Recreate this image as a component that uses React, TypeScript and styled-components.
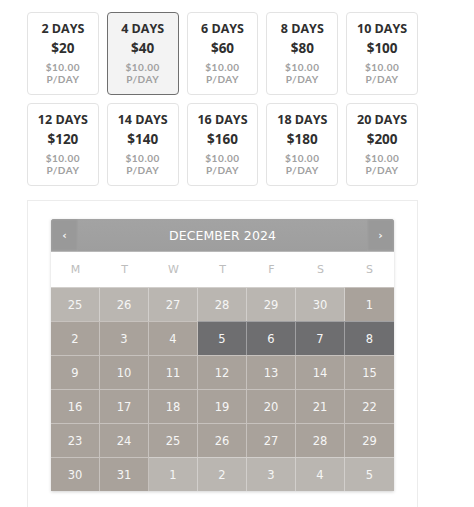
import React from "react";
import styled, { createGlobalStyle } from "styled-components";

const GlobalStyle = createGlobalStyle`
  html, body {
    margin: 0;
    padding: 0;
    background: #ffffff;
  }
  * {
    box-sizing: border-box;
  }
`;

type Plan = { days: number; total: number };

const plans: Plan[] = [2, 4, 6, 8, 10, 12, 14, 16, 18, 20].map((days) => ({
  days,
  total: days * 10,
}));

type DayKind = "other" | "current" | "selected";
type Day = { label: number; kind: DayKind };

const buildDays = (): Day[] => {
  const days: Day[] = [];
  [25, 26, 27, 28, 29, 30].forEach((d) => days.push({ label: d, kind: "other" }));
  for (let d = 1; d <= 31; d++) {
    days.push({ label: d, kind: d >= 5 && d <= 8 ? "selected" : "current" });
  }
  [1, 2, 3, 4, 5].forEach((d) => days.push({ label: d, kind: "other" }));
  return days;
};

const weekDays = ["M", "T", "W", "T", "F", "S", "S"];

export default function App() {
  const days = buildDays();
  return (
    <>
      <GlobalStyle />
      <Page>
        <PlanGrid>
          {plans.map((plan) => (
            <PlanCard key={plan.days} $active={plan.days === 4}>
              <PlanTitle>{plan.days} DAYS</PlanTitle>
              <PlanPrice>${plan.total}</PlanPrice>
              <PlanRate>$10.00</PlanRate>
              <PlanRate>P/DAY</PlanRate>
            </PlanCard>
          ))}
        </PlanGrid>
        <CalendarPanel>
          <Calendar>
            <CalendarHeader>
              <NavButton>‹</NavButton>
              <MonthTitle>DECEMBER 2024</MonthTitle>
              <NavButton>›</NavButton>
            </CalendarHeader>
            <WeekRow>
              {weekDays.map((w, i) => (
                <WeekDay key={i}>{w}</WeekDay>
              ))}
            </WeekRow>
            <DayGrid>
              {days.map((d, i) => (
                <DayCell key={i} $kind={d.kind} $last={i % 7 === 6}>
                  {d.label}
                </DayCell>
              ))}
            </DayGrid>
          </Calendar>
        </CalendarPanel>
      </Page>
    </>
  );
}

const Page = styled.div`
  padding: 12px 0 0 27px;
  width: 474px;
  height: 507px;
  overflow: hidden;
`;

const PlanGrid = styled.div`
  width: 391px;
  display: grid;
  grid-template-columns: repeat(5, 1fr);
  gap: 8px;
`;

const PlanCard = styled.div<{ $active?: boolean }>`
  height: 83px;
  padding-top: 6px;
  display: flex;
  flex-direction: column;
  align-items: center;
  border-radius: 4px;
  border: 1px solid ${(p) => (p.$active ? "#6f6f6f" : "#e3e3e3")};
  background: ${(p) => (p.$active ? "#f3f3f3" : "#ffffff")};
  font-family: "Open Sans", "Liberation Sans", sans-serif;
  text-align: center;
`;

const PlanTitle = styled.div`
  font-size: 12.5px;
  font-weight: 700;
  line-height: 19px;
  color: #2f2f2f;
`;

const PlanPrice = styled.div`
  font-size: 13.5px;
  font-weight: 700;
  line-height: 21px;
  color: #2f2f2f;
  margin-bottom: 2px;
`;

const PlanRate = styled.div`
  font-family: Lato, "Open Sans", sans-serif;
  font-size: 10px;
  font-weight: 700;
  line-height: 12px;
  letter-spacing: 0.5px;
  color: #a0a0a0;
`;

const CalendarPanel = styled.div`
  margin-top: 14px;
  width: 391px;
  height: 400px;
  border: 1px solid #ececec;
  padding: 18px 23px;
`;

const Calendar = styled.div`
  width: 343px;
  font-family: "DejaVu Sans", Verdana, sans-serif;
  box-shadow: 0 1px 3px rgba(0, 0, 0, 0.18);
`;

const CalendarHeader = styled.div`
  height: 33px;
  display: flex;
  align-items: stretch;
  border-radius: 3px 3px 0 0;
  overflow: hidden;
  background: linear-gradient(to bottom, #a3a3a3, #9e9e9e);
  border-bottom: 1px solid #b8b8b8;
`;

const NavButton = styled.div`
  width: 27px;
  display: flex;
  align-items: center;
  justify-content: center;
  background: #999999;
  color: #f4f4f4;
  font-size: 11px;
  font-weight: 700;
  box-shadow: inset 0 0 3px rgba(255, 255, 255, 0.15);
`;

const MonthTitle = styled.div`
  flex: 1;
  display: flex;
  align-items: center;
  justify-content: center;
  color: #ffffff;
  font-size: 12.5px;
  letter-spacing: 0.1px;
`;

const WeekRow = styled.div`
  height: 35px;
  display: grid;
  grid-template-columns: repeat(7, 1fr);
  background: #ffffff;
`;

const WeekDay = styled.div`
  display: flex;
  align-items: center;
  justify-content: center;
  color: #bdbdbd;
  font-size: 11px;
`;

const DayGrid = styled.div`
  display: grid;
  grid-template-columns: repeat(7, 1fr);
`;

const dayColors: Record<DayKind, string> = {
  other: "#bab6b1",
  current: "#a9a29b",
  selected: "#6e6e70",
};

const DayCell = styled.div<{ $kind: DayKind; $last?: boolean }>`
  height: 34px;
  display: flex;
  align-items: center;
  justify-content: center;
  background: ${(p) => dayColors[p.$kind]};
  color: #f6f6f6;
  font-size: 11.5px;
  border-top: 1px solid rgba(255, 255, 255, 0.35);
  border-right: ${(p) => (p.$last ? "none" : "1px solid rgba(255, 255, 255, 0.35)")};
`;
